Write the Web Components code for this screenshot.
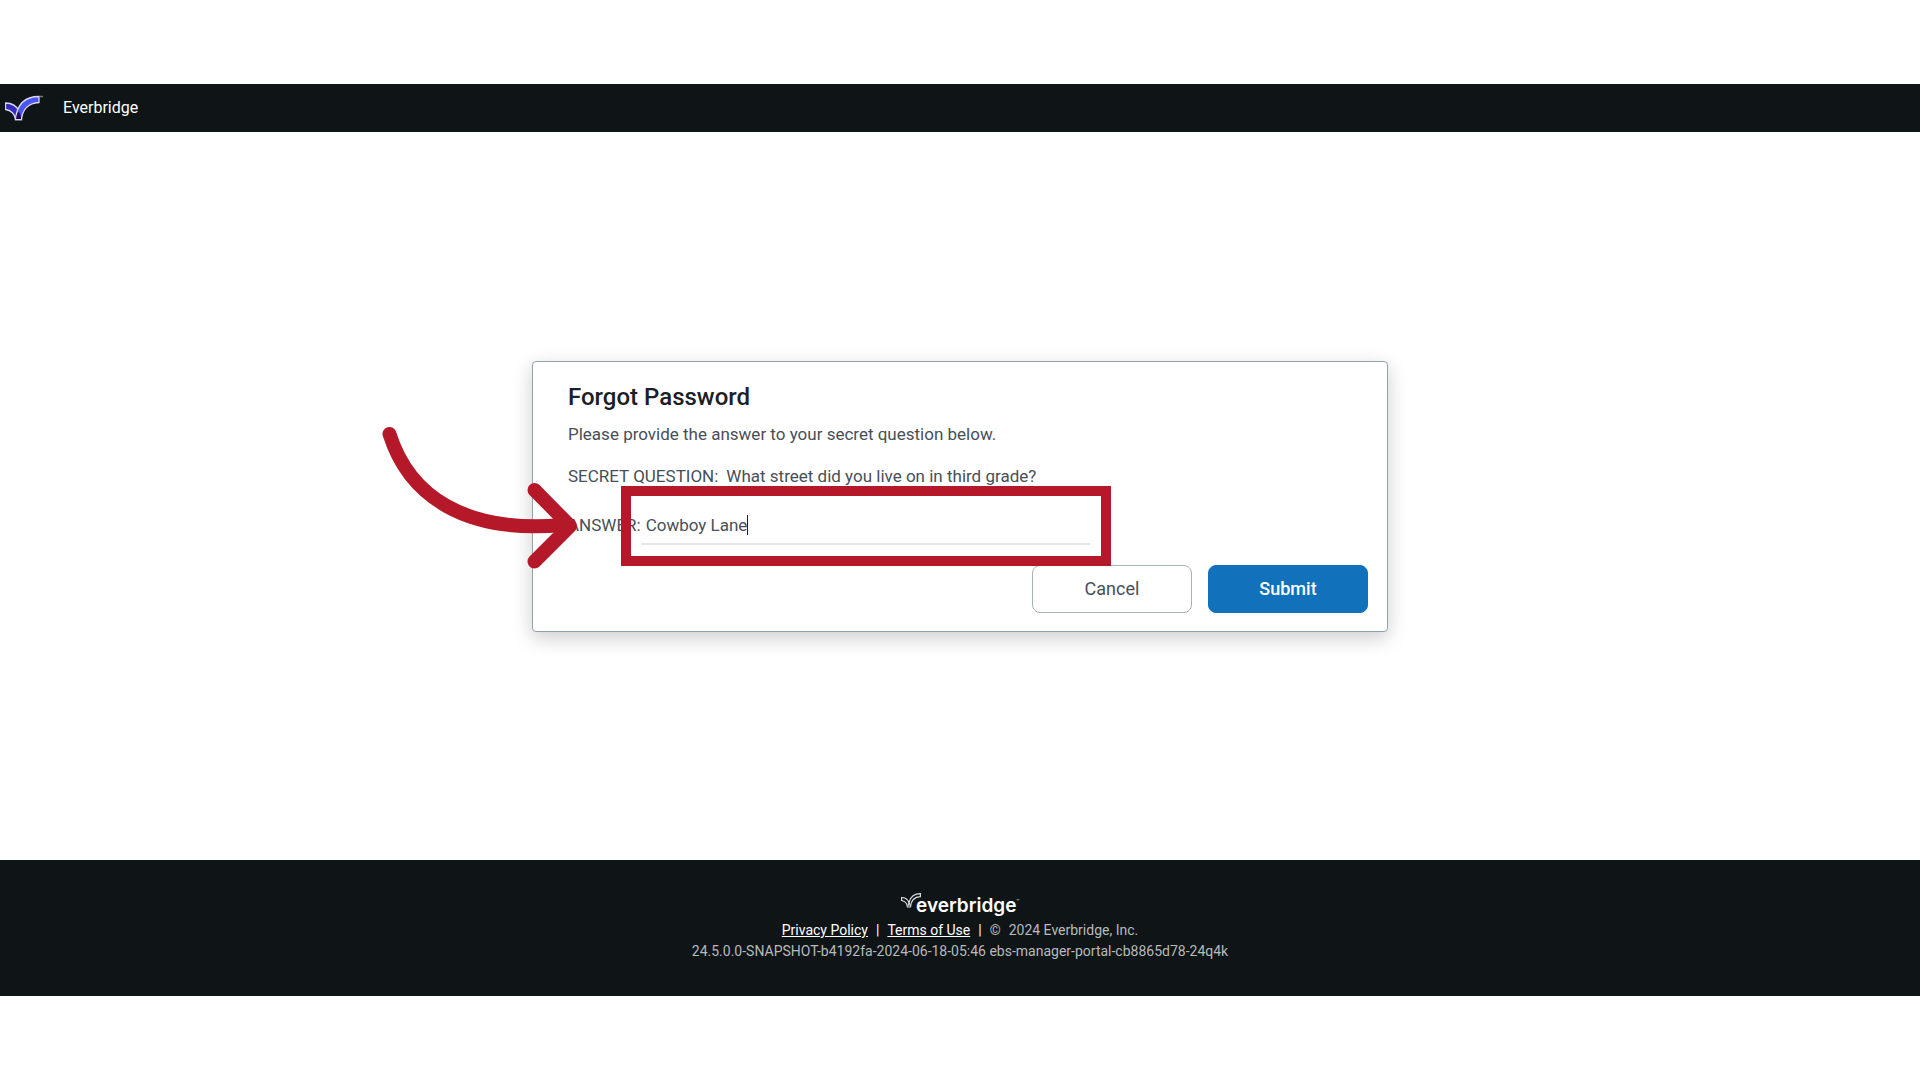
<!DOCTYPE html>
<html lang="en">
<head>
<meta charset="utf-8">
<title>Everbridge - Forgot Password</title>
<style>
html, body { margin: 0; }
body { font-family: Roboto, "Liberation Sans", sans-serif; color: #474f57; background: #fff; }
</style>
</head>
<body>
<eb-page>
  <eb-header slot="header">Everbridge</eb-header>
  <eb-card heading="Forgot Password">
    <p slot="intro">Please provide the answer to your secret question below.</p>
    <eb-question slot="fields" label="SECRET QUESTION:">What street did you live on in third grade?</eb-question>
    <eb-answer slot="fields" label="ANSWER:" value="Cowboy Lane"></eb-answer>
    <eb-button slot="actions">Cancel</eb-button>
    <eb-button slot="actions" primary>Submit</eb-button>
    <eb-callout slot="callout"></eb-callout>
  </eb-card>
  <eb-footer slot="footer"></eb-footer>
</eb-page>
<script>
function define(name, render) {
  customElements.define(name, class extends HTMLElement {
    constructor() {
      super();
      this.attachShadow({ mode: 'open' });
    }
    connectedCallback() {
      this.shadowRoot.innerHTML = render(this);
    }
  });
}

define('eb-page', () => `
<style>
:host { display: flex; flex-direction: column; min-height: 100vh; box-sizing: border-box; padding: 84px 0; }
main { flex: 1; display: flex; align-items: center; justify-content: center; }
</style>
<slot name="header"></slot>
<main><slot></slot></main>
<slot name="footer"></slot>`);

define('eb-header', () => `
<style>
:host { display: block; }
header { display: flex; align-items: center; gap: 18px; height: 48px; padding-left: 5px; background: #0f1517; color: #fff; font-size: 16px; line-height: 20px; box-sizing: border-box; }
svg { display: block; }
</style>
<header>
  <svg width="40" height="28" viewBox="0 0 40 28" aria-hidden="true">
    <path d="M.500 9C7 9 11.500 12 14 17L16.500 25.500H10.500C10 20.500 6 16 .500 15.500Z" fill="#3629bd" stroke="#d6d8ee" stroke-width="1.300"/>
    <path d="M34 2.500C21 2.500 12 9.500 10.500 25.500H16.500C17.500 15 24 9 34 8.500Z" fill="#4c56ee" stroke="#d6d8ee" stroke-width="1.300"/>
    <path d="M13.500 17.500C12 19.500 11.200 22.500 11.200 25H16C16 22.500 15.500 19.500 13.500 17.500Z" fill="#24065f"/>
    <path d="M35 2.500H38" stroke="#777" stroke-width="1.500"/>
  </svg>
  <span><slot></slot></span>
</header>`);

define('eb-card', el => `
<style>
:host { display: block; width: 856px; max-width: 100%; }
section { position: relative; box-sizing: border-box; padding: 20px 19px 18px 35px; border: 1px solid #91a4ad; border-radius: 4px; background: #fff; box-shadow: 0 6px 20px rgba(0,0,0,.2); }
h1 { margin: 0; color: #1b2025; font-size: 24px; line-height: 30px; font-weight: 500; }
::slotted(p) { margin: 11px 0 0; font-size: 17px; line-height: 22px; }
.actions { display: flex; justify-content: flex-end; gap: 16px; margin-top: 20px; }
</style>
<section>
  <h1>${el.getAttribute('heading')}</h1>
  <slot name="intro"></slot>
  <slot name="fields"></slot>
  <div class="actions"><slot name="actions"></slot></div>
  <slot name="callout"></slot>
</section>`);

define('eb-question', el => `
<style>
:host { display: flex; gap: 8px; margin-top: 20px; font-size: 17px; line-height: 22px; }
</style>
<span>${el.getAttribute('label')}</span><span><slot></slot></span>`);

define('eb-answer', el => `
<style>
:host { display: flex; align-items: center; margin-top: 18px; font-size: 17px; line-height: 22px; }
.field { display: flex; align-items: center; width: 449px; height: 40px; box-sizing: border-box; padding: 2px 0 0 5px; border-bottom: 2px solid #e5e8eb; }
input { field-sizing: content; border: 0; padding: 0; margin: 0; outline: 0; background: none; font: inherit; color: inherit; }
.caret { width: 1px; height: 20px; background: #1b2025; }
</style>
<label for="answer">${el.getAttribute('label')}</label>
<div class="field"><input id="answer" type="text" value="${el.getAttribute('value')}"><span class="caret"></span></div>`);

define('eb-button', el => `
<style>
:host { display: block; }
button { width: 160px; height: 48px; box-sizing: border-box; border: 1px solid #a5b4bb; border-radius: 8px; background: #fff; color: #474f57; font: 400 18px/24px Roboto, sans-serif; }
:host([primary]) button { border-color: #1171ba; background: #1171ba; color: #fff; font-weight: 500; }
</style>
<button type="button"><slot></slot></button>`);

define('eb-callout', () => `
<style>
:host { display: block; position: absolute; left: -152px; top: 60px; pointer-events: none; }
.box { position: absolute; left: 240px; top: 64px; width: 490px; height: 80px; box-sizing: border-box; border: 10px solid #b41829; }
svg { display: block; }
</style>
<svg width="200" height="150" viewBox="0 0 200 150" fill="none" stroke="#b41829" stroke-width="14" stroke-linecap="round" stroke-linejoin="round" aria-hidden="true">
  <path d="M8.500 12C28 74 84 112 182 103"/>
  <path d="M153.500 68L189 104L153.500 139.500"/>
</svg>
<div class="box"></div>`);

define('eb-footer', () => `
<style>
:host { display: block; }
footer { display: flex; flex-direction: column; align-items: center; height: 136px; box-sizing: border-box; padding-top: 33px; background: #0f1517; color: #b7b9ba; font-size: 14px; line-height: 21px; }
.brand { display: flex; align-items: flex-start; height: 27px; color: #fff; font: 600 19px/25px Inter, sans-serif; }
.brand svg { display: block; margin-right: -5px; }
.brand small { font-size: 4px; line-height: 18px; }
.links { display: flex; gap: 8px; color: #b7b9ba; }
a { color: #fff; text-decoration: underline; }
.bar { color: #fff; }
</style>
<footer>
  <div class="brand">
    <svg width="20" height="18" viewBox="0 0 20 18" fill="none" stroke="#d8dadb" stroke-width="1.200" aria-hidden="true">
      <path d="M.600 4.500C4 4.500 6.500 6 8 9.500C9.500 4 13 .700 19.400 .700V3.700C13 4 10 7 9.500 14H6.500C6 10 4 8 .600 7.500Z"/>
      <path d="M8 9.500L6.800 13M8 9.500L9.400 13"/>
    </svg>
    <span>everbridge</span><small>™</small>
  </div>
  <div class="links"><a href="#privacy">Privacy Policy</a><span class="bar">|</span><a href="#terms">Terms of Use</a><span class="bar">|</span><span>©</span><span>2024 Everbridge, Inc.</span></div>
  <div>24.5.0.0-SNAPSHOT-b4192fa-2024-06-18-05:46 ebs-manager-portal-cb8865d78-24q4k</div>
</footer>`);
</script>
</body>
</html>
